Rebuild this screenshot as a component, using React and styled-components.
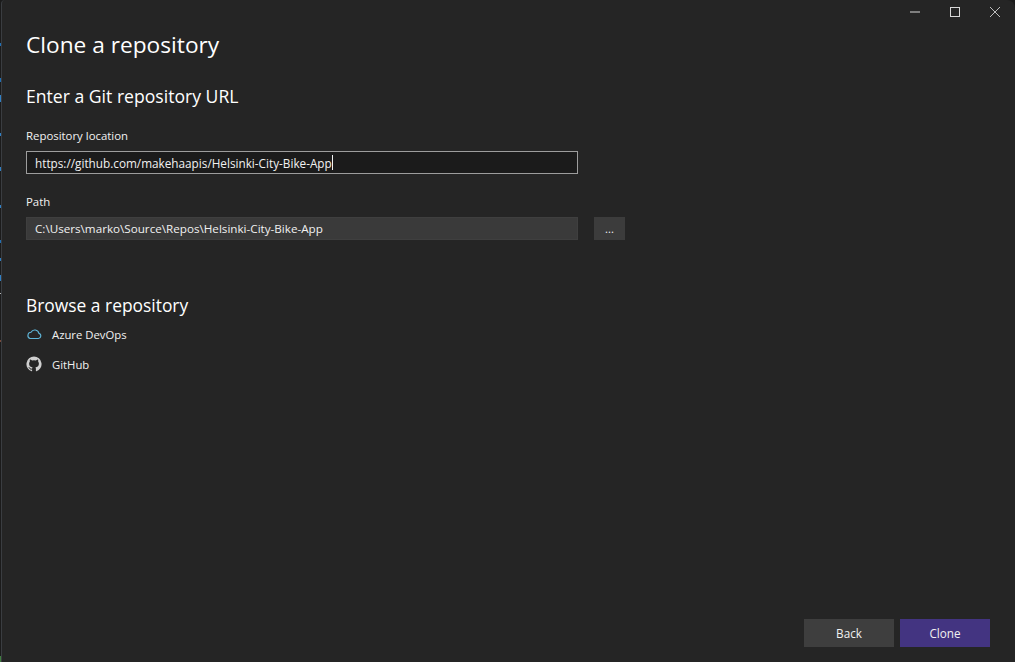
import React from "react";
import styled, { createGlobalStyle } from "styled-components";

const Global = createGlobalStyle`
  html, body { margin: 0; padding: 0; background: #1b1b1b; overflow: hidden; }
  * { box-sizing: border-box; }
`;

const Shell = styled.div`
  width: 1015px;
  height: 662px;
  display: flex;
`;

const BehindEdge = styled.div`
  width: 1px;
  background: linear-gradient(
    to bottom,
    #1b1b1b 0 43px, #1f6fb5 43px 46px,
    #1b1b1b 46px 78px, #1f6fb5 78px 82px,
    #1b1b1b 82px 95px, #2f7fc4 95px 102px,
    #1b1b1b 102px 133px, #2f7fc4 133px 136px,
    #1b1b1b 136px 167px, #2f7fc4 167px 171px,
    #1b1b1b 171px 205px, #2f7fc4 205px 208px,
    #1b1b1b 208px 240px, #1f6fb5 240px 243px,
    #1b1b1b 243px 258px, #2f7fc4 258px 261px,
    #1b1b1b 261px 275px, #2f7fc4 275px 281px,
    #1b1b1b 281px 293px, #b8b8b8 293px 294px,
    #1b1b1b 294px 340px, #7a4a3a 340px 342px,
    #1b1b1b 342px 656px, #3f7f3f 656px 662px
  );
`;

const Window = styled.div`
  flex: 1;
  background: #252525;
  border-left: 1px solid #3a3d41;
  border-top-right-radius: 8px;
  border-top-left-radius: 4px;
  color: #f1f1f1;
  font-family: "Open Sans", "Noto Sans", "Liberation Sans", sans-serif;
  display: flex;
  flex-direction: column;
  padding: 0 25px 15px 24px;
`;

const TitleBar = styled.div`
  height: 32px;
  margin-right: -25px;
  display: flex;
  justify-content: flex-end;
`;

const WinButton = styled.div`
  width: 40px;
  height: 24px;
  display: flex;
  align-items: center;
  justify-content: center;
`;

const Title = styled.h1`
  margin: 0;
  font-size: 22.7px;
  line-height: 26px;
  font-weight: 400;
  color: #fff;
`;

const Heading = styled.h2`
  margin: ${(p) => p.$top}px 0 0;
  font-size: ${(p) => p.$size}px;
  line-height: 24px;
  font-weight: 400;
  color: #fff;
`;

const Label = styled.label`
  display: block;
  margin-top: ${(p) => p.$top}px;
  font-size: 11.4px;
  line-height: 16px;
  color: #f1f1f1;
`;

const FieldRow = styled.div`
  display: flex;
  gap: 16px;
  margin-top: 7px;
`;

const Field = styled.div`
  width: 552px;
  height: 23px;
  padding-left: 8px;
  display: flex;
  align-items: center;
  font-size: ${(p) => (p.$focused ? 11.75 : 11.67)}px;
  color: #f1f1f1;
  background: ${(p) => (p.$focused ? "#1b1b1b" : "#3a3a3a")};
  border: 1px solid ${(p) => (p.$focused ? "#9d9d9d" : "#3f3f3f")};
`;

const Caret = styled.span`
  width: 1px;
  height: 15px;
  background: #f1f1f1;
`;

const DotsButton = styled.div`
  width: 31px;
  height: 23px;
  background: #3c3c3c;
  font-size: 11.2px;
  display: flex;
  align-items: center;
  justify-content: center;
`;

const ProviderList = styled.div`
  margin-top: 7px;
  display: flex;
  flex-direction: column;
  gap: 10px;
`;

const Provider = styled.div`
  height: 20px;
  display: flex;
  align-items: center;
  gap: 10px;
  font-size: 11.3px;
  color: #f1f1f1;
`;

const Footer = styled.div`
  margin-top: auto;
  display: flex;
  justify-content: flex-end;
  gap: 6px;
`;

const ActionButton = styled.div`
  width: 90px;
  height: 28px;
  display: flex;
  align-items: center;
  justify-content: center;
  font-size: 11.7px;
  color: #f1f1f1;
  background: ${(p) => (p.$primary ? "#433481" : "#3e3e3e")};
`;

const IconCloud = () => (
  <svg width="16" height="16" viewBox="0 0 16 16" fill="none" stroke="#5fb6d9" strokeWidth="1.1">
    <path d="M4 12.5h8.4a2.6 2.6 0 0 0 .5-5.1A4.2 4.2 0 0 0 5 6.3 3.2 3.2 0 0 0 4 12.5z" />
  </svg>
);

const IconGithub = () => (
  <svg width="16" height="16" viewBox="0 0 16 16" fill="#cfcfcf">
    <path d="M8 .5a7.6 7.6 0 0 0-2.4 14.8c.4.1.5-.2.5-.4v-1.3c-2.1.5-2.6-1-2.6-1-.3-.9-.8-1.1-.8-1.1-.7-.5 0-.5 0-.5.8.1 1.2.8 1.2.8.7 1.2 1.8.9 2.2.7.1-.5.3-.9.5-1.1-1.7-.2-3.5-.9-3.5-3.8 0-.8.3-1.5.8-2-.1-.2-.3-1 .1-2 0 0 .6-.2 2.1.8a7.3 7.3 0 0 1 3.8 0c1.5-1 2.1-.8 2.1-.8.4 1 .2 1.8.1 2 .5.5.8 1.2.8 2 0 2.9-1.8 3.6-3.5 3.8.3.2.5.7.5 1.4v2.1c0 .2.1.5.5.4A7.6 7.6 0 0 0 8 .5z" />
  </svg>
);

export default function App() {
  return (
    <>
      <Global />
      <Shell>
        <BehindEdge />
        <Window>
          <TitleBar>
            <WinButton>
              <svg width="12" height="12" viewBox="0 0 12 12"><path d="M1 6h10" stroke="#d8d8d8" /></svg>
            </WinButton>
            <WinButton>
              <svg width="12" height="12" viewBox="0 0 12 12" fill="none"><rect x="1.5" y="1.5" width="9" height="9" stroke="#d8d8d8" /></svg>
            </WinButton>
            <WinButton>
              <svg width="12" height="12" viewBox="0 0 12 12" fill="none"><path d="M1 1l10 10M11 1L1 11" stroke="#bdbdbd" /></svg>
            </WinButton>
          </TitleBar>
          <Title>Clone a repository</Title>
          <Heading $top={26} $size={17.6}>Enter a Git repository URL</Heading>
          <Label $top={20}>Repository location</Label>
          <FieldRow>
            <Field $focused>
              https://github.com/makehaapis/Helsinki-City-Bike-App<Caret />
            </Field>
          </FieldRow>
          <Label $top={20}>Path</Label>
          <FieldRow>
            <Field>C:\Users\marko\Source\Repos\Helsinki-City-Bike-App</Field>
            <DotsButton>...</DotsButton>
          </FieldRow>
          <Heading $top={53} $size={17.4}>Browse a repository</Heading>
          <ProviderList>
            <Provider><IconCloud />Azure DevOps</Provider>
            <Provider><IconGithub />GitHub</Provider>
          </ProviderList>
          <Footer>
            <ActionButton>Back</ActionButton>
            <ActionButton $primary>Clone</ActionButton>
          </Footer>
        </Window>
      </Shell>
    </>
  );
}
